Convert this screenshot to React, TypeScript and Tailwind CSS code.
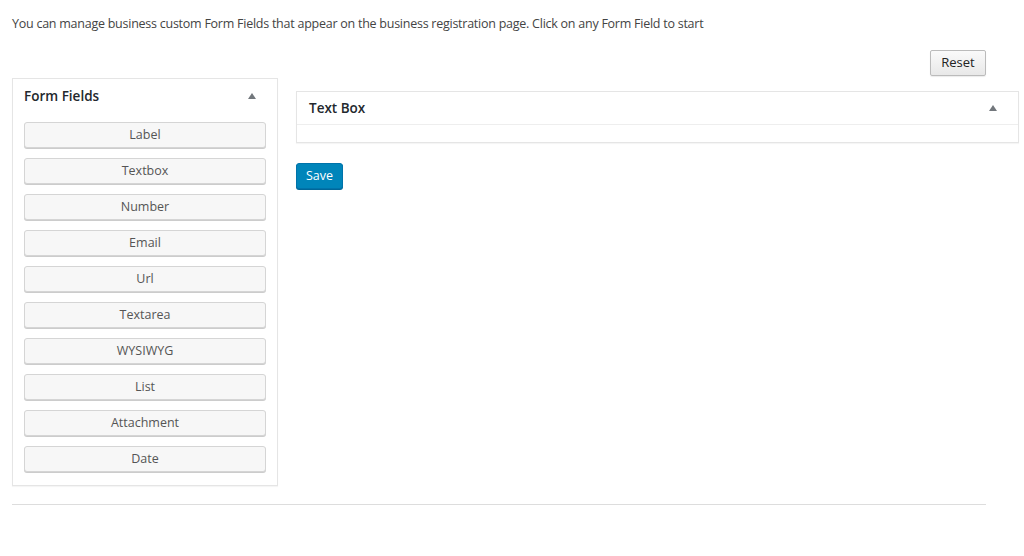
const FIELDS = ['Label', 'Textbox', 'Number', 'Email', 'Url', 'Textarea', 'WYSIWYG', 'List', 'Attachment', 'Date'];

function Caret() {
  return (
    <svg width="8" height="6" viewBox="0 0 8 6" className="shrink-0">
      <polygon points="4,0 8,6 0,6" fill="#72777c" />
    </svg>
  );
}

export default function App() {
  return (
    <div className="min-h-[556px] bg-white px-[12px] pt-[15px] text-[#444] font-['Open_Sans','Noto_Sans',sans-serif]">
      <p className="text-[12.5px] leading-[18px] tracking-[-0.25px]">
        You can manage business custom Form Fields that appear on the business registration page. Click on any Form Field to start
      </p>

      {/* reset row */}
      <div className="mt-[17px] flex w-[974px] justify-end">
        <button className="h-[26px] w-[56px] rounded-[2px] border border-[#bbb] bg-gradient-to-b from-[#fafafa] to-[#e8e8e8] text-[13px] text-[#222] shadow-[0_1px_1px_rgba(0,0,0,0.08)]">
          Reset
        </button>
      </div>

      <div className="mt-[2px] flex items-start">
        {/* form fields panel */}
        <div className="w-[266px] shrink-0 border border-[#e5e5e5] px-[11px] pb-[13px] shadow-[0_1px_1px_rgba(0,0,0,0.04)]">
          <div className="flex items-center justify-between pt-[7px] pr-[10px]">
            <h2 className="text-[13.5px] font-semibold leading-[20px] text-[#23282d]">Form Fields</h2>
            <Caret />
          </div>
          <div className="mt-[16px] flex flex-col gap-[10px]">
            {FIELDS.map((f) => (
              <button
                key={f}
                className="h-[26px] w-full rounded-[3px] border border-[#d5d5d5] bg-[#f7f7f7] pt-[1px] text-[12.5px] text-[#555] shadow-[0_1px_0_#ccc]"
              >
                {f}
              </button>
            ))}
          </div>
        </div>

        {/* right column */}
        <div className="ml-[18px] mt-[13px] flex w-[723px] shrink-0 flex-col items-start">
          <div className="w-full border border-[#e5e5e5] shadow-[0_1px_1px_rgba(0,0,0,0.04)]">
            <div className="flex h-[33px] items-center justify-between border-b border-[#eee] pl-[12px] pr-[21px]">
              <h2 className="text-[13.5px] font-semibold text-[#23282d]">Text Box</h2>
              <Caret />
            </div>
            <div className="h-[17px]" />
          </div>
          <button className="mt-[20px] h-[26px] w-[47px] rounded-[3px] border border-[#0073aa] bg-[#0085ba] text-[12.5px] text-white shadow-[0_1px_0_#006799]">
            Save
          </button>
        </div>
      </div>

      <hr className="mt-[18px] w-[974px] border-t border-[#ddd]" />
    </div>
  );
}
